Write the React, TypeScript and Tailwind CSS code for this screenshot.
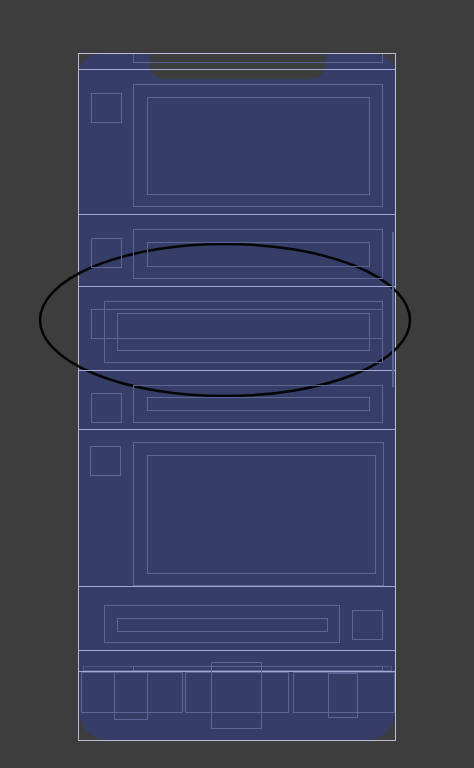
const line = "border-[#a3a9d0]";
const faint = "border border-[#5d6594]";

function Square({ className = "" }: { className?: string }) {
  return <div className={`w-[31px] h-[30px] shrink-0 ${faint} ${className}`} />;
}

export default function App() {
  return (
    <div className="relative min-h-screen w-full bg-[#3d3d3d] pt-[53px] pl-[78px]">
      <div className="w-[318px] h-[688px] border border-[#b9bdd9]">
        <div className="relative h-full rounded-t-[20px] rounded-b-[28px] bg-[#363d66]">
          {/* notch */}
          <div className="absolute left-[71px] top-0 z-0 h-[25px] w-[175px] rounded-b-[14px] bg-[#3d3d3d]" />

          {/* status bar */}
          <div className={`relative z-10 h-[16px] border-b ${line}`}>
            <div className="ml-[54px] h-[9px] w-[250px] border-x border-b border-[#5d6594]" />
          </div>

          {/* section 1 */}
          <div className={`relative z-10 flex h-[145px] border-b ${line}`}>
            <Square className="ml-[12px] mt-[23px]" />
            <div className={`ml-[11px] mt-[14px] h-[123px] w-[250px] ${faint} pl-[13px] pr-[12px] pt-[12px]`}>
              <div className={`h-[98px] w-full ${faint}`} />
            </div>
          </div>

          {/* section 2 */}
          <div className={`relative z-10 flex h-[72px] border-b ${line}`}>
            <Square className="ml-[12px] mt-[23px]" />
            <div className={`ml-[11px] mt-[14px] h-[50px] w-[250px] ${faint} pl-[13px] pr-[12px] pt-[12px]`}>
              <div className={`h-[25px] w-full ${faint}`} />
            </div>
          </div>

          {/* section 3 */}
          <div className={`relative z-10 h-[84px] border-b ${line}`}>
            <div className={`absolute left-[12px] top-[22px] h-[30px] w-[292px] ${faint}`} />
            <div className={`absolute left-[25px] top-[14px] h-[62px] w-[279px] ${faint}`} />
            <div className={`absolute left-[38px] top-[26px] h-[38px] w-[253px] ${faint}`} />
          </div>

          {/* section 4 */}
          <div className={`relative z-10 flex h-[59px] border-b ${line}`}>
            <Square className="ml-[12px] mt-[22px]" />
            <div className={`ml-[11px] mt-[14px] h-[38px] w-[250px] ${faint} pl-[13px] pr-[12px] pt-[11px]`}>
              <div className={`h-[14px] w-full ${faint}`} />
            </div>
          </div>

          {/* section 5 */}
          <div className={`relative z-10 flex h-[157px] border-b ${line}`}>
            <Square className="ml-[11px] mt-[16px]" />
            <div className={`ml-[12px] mt-[12px] h-[144px] w-[251px] ${faint} pl-[13px] pr-[7px] pt-[12px]`}>
              <div className={`h-[119px] w-full ${faint}`} />
            </div>
          </div>

          {/* section 6 */}
          <div className={`relative z-10 flex h-[64px] border-b ${line}`}>
            <div className={`ml-[25px] mt-[18px] h-[38px] w-[236px] ${faint} pl-[12px] pr-[11px] pt-[12px]`}>
              <div className={`h-[14px] w-full ${faint}`} />
            </div>
            <Square className="ml-[12px] mt-[23px]" />
          </div>

          {/* section 7 */}
          <div className={`relative z-10 h-[21px] border-b ${line}`}>
            <div className="absolute left-[4px] top-[15px] h-[5px] w-[309px] border border-[#4f5784]" />
            <div className="absolute left-[54px] top-[15px] h-[5px] w-[250px] border border-[#5d6594]" />
          </div>

          {/* tab bar */}
          <div className="relative z-10 flex gap-[2px] pl-[2px]">
            <div className={`h-[41px] w-[102px] ${faint}`} />
            <div className={`h-[41px] w-[104px] ${faint}`} />
            <div className={`ml-[2px] h-[41px] w-[102px] ${faint}`} />
            <div className={`absolute left-[35px] top-0 h-[48px] w-[34px] ${faint}`} />
            <div className={`absolute left-[132px] top-[-10px] h-[67px] w-[51px] ${faint}`} />
            <div className={`absolute left-[249px] top-[1px] h-[45px] w-[30px] ${faint}`} />
          </div>

          {/* scrollbar */}
          <div className="absolute left-[313px] top-[178px] z-10 h-[155px] w-[2px] bg-[#5d6594]" />
        </div>
      </div>

      {/* annotation ellipse */}
      <svg className="absolute left-[38px] top-[242px]" width="374" height="156" viewBox="0 0 374 156">
        <ellipse cx="187" cy="78" rx="185" ry="76" fill="none" stroke="#050505" strokeWidth="2.5" />
      </svg>
    </div>
  );
}
